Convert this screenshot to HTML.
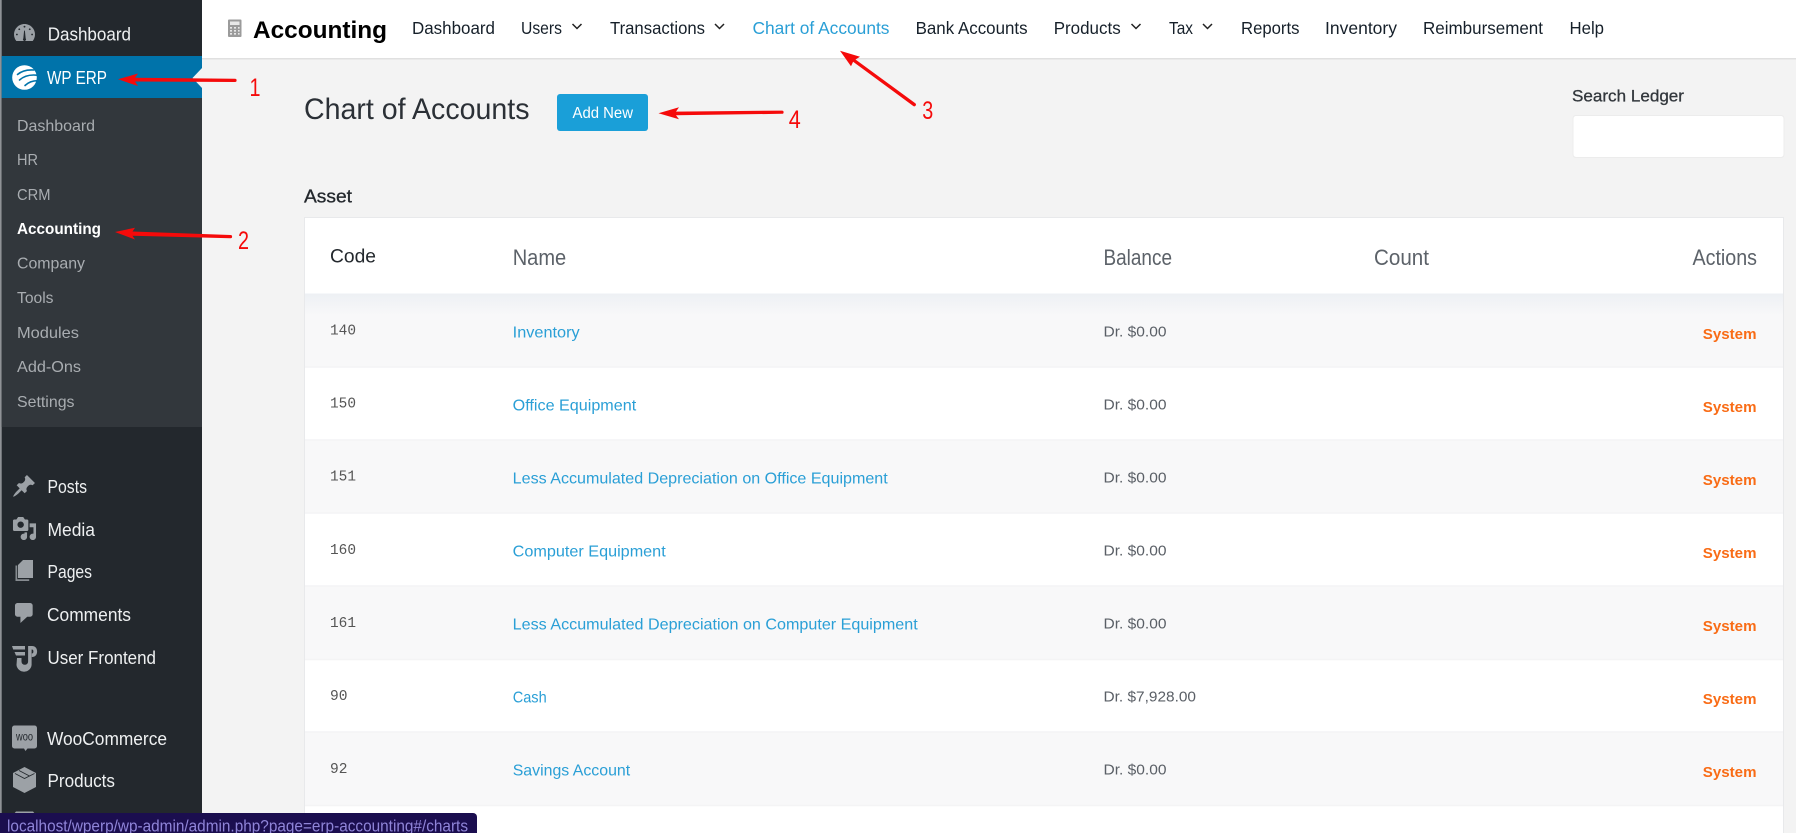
<!DOCTYPE html>
<html lang="en"><head><meta charset="utf-8"><title>Chart of Accounts</title>
<style>
html,body{margin:0;padding:0;width:1796px;height:833px;overflow:hidden;background:#f3f3f3}
svg{display:block}
text{font-family:"Liberation Sans",sans-serif}
.side{font-size:18px;fill:#eef0f1}
.sub{font-size:16px;fill:#a9adb1}
.nav{font-size:17.5px;fill:#16202a}
.th{font-size:22px;fill:#5c6269}
.mono{font-family:"Liberation Mono",monospace;font-size:14.5px;fill:#555}
.link{font-size:16px;fill:#2a9fd6}
.bal{font-size:15px;fill:#5a5f66}
.sys{font-size:15px;font-weight:bold;fill:#f96c16}
.num{font-size:25px;fill:#f50a0a}
.ic{fill:#9ca1a6}
</style></head><body>
<svg width="1796" height="833" viewBox="0 0 1796 833" xmlns="http://www.w3.org/2000/svg">
<defs><linearGradient id="g" x1="0" y1="0" x2="0" y2="1"><stop offset="0" stop-color="#edf0f4"/><stop offset="1" stop-color="#f8f8f9"/></linearGradient></defs>
<rect width="1796" height="833" fill="#f3f3f3"/>

<!-- top header -->
<rect x="202" width="1594" height="58" fill="#fff"/>
<rect x="202" y="58" width="1594" height="1.5" fill="#e0e0e0"/>
<rect x="228" y="19.5" width="13.5" height="17.5" rx="1" fill="#9b9b9b"/>
<rect x="230" y="21.5" width="9.5" height="3.5" fill="#e8e8e8"/>
<path d="M230 27h2v1.600h-2zM234 27h2v1.600h-2zM238 27h1.600v1.600H238zM230 30h2v1.600h-2zM234 30h2v1.600h-2zM238 30h1.600v1.600H238zM230 33h2v1.600h-2zM234 33h2v1.600h-2zM238 33h1.600v1.600H238z" fill="#e8e8e8"/>
<text x="253" y="38" font-size="24.500" font-weight="bold" fill="#000" textLength="134" lengthAdjust="spacingAndGlyphs">Accounting</text>
<text class="nav" x="412" y="34" textLength="83" lengthAdjust="spacingAndGlyphs">Dashboard</text>
<text class="nav" x="521" y="34" textLength="41" lengthAdjust="spacingAndGlyphs">Users</text>
<path d="M572.500 24l4.500 4.500 4.500-4.500" fill="none" stroke="#222" stroke-width="1.500"/>
<text class="nav" x="610" y="34" textLength="95" lengthAdjust="spacingAndGlyphs">Transactions</text>
<path d="M715 24l4.500 4.500 4.500-4.500" fill="none" stroke="#222" stroke-width="1.500"/>
<text class="nav" x="752.500" y="34" style="fill:#2a9fd6" textLength="137" lengthAdjust="spacingAndGlyphs">Chart of Accounts</text>
<text class="nav" x="915.600" y="34" textLength="112" lengthAdjust="spacingAndGlyphs">Bank Accounts</text>
<text class="nav" x="1053.700" y="34" textLength="67" lengthAdjust="spacingAndGlyphs">Products</text>
<path d="M1131.500 24l4.500 4.500 4.500-4.500" fill="none" stroke="#222" stroke-width="1.500"/>
<text class="nav" x="1169" y="34" textLength="24" lengthAdjust="spacingAndGlyphs">Tax</text>
<path d="M1203 24l4.500 4.500 4.500-4.500" fill="none" stroke="#222" stroke-width="1.500"/>
<text class="nav" x="1241" y="34" textLength="58.500" lengthAdjust="spacingAndGlyphs">Reports</text>
<text class="nav" x="1325" y="34" textLength="72" lengthAdjust="spacingAndGlyphs">Inventory</text>
<text class="nav" x="1423" y="34" textLength="120" lengthAdjust="spacingAndGlyphs">Reimbursement</text>
<text class="nav" x="1569.500" y="34" textLength="34.500" lengthAdjust="spacingAndGlyphs">Help</text>

<!-- title row -->
<text x="304" y="119" font-size="29.500" fill="#2b3036" textLength="225.500" lengthAdjust="spacingAndGlyphs">Chart of Accounts</text>
<rect x="557" y="94" width="91" height="37" rx="3" fill="#1a9fd8"/>
<text x="572.500" y="118" font-size="15.500" fill="#fff" textLength="60.500" lengthAdjust="spacingAndGlyphs">Add New</text>
<text x="1572" y="101.500" font-size="17" fill="#32373c" stroke="#32373c" stroke-width=".3" textLength="112" lengthAdjust="spacingAndGlyphs">Search Ledger</text>
<rect x="1573" y="115.500" width="211" height="42" rx="3" fill="#fff" stroke="#ececec"/>
<text x="304" y="202.500" font-size="18.500" fill="#23282d" stroke="#23282d" stroke-width=".3" textLength="48" lengthAdjust="spacingAndGlyphs">Asset</text>

<!-- card -->
<rect x="304.500" y="217.500" width="1479" height="640" fill="#fff" stroke="#e8e9eb"/>
<rect x="305" y="293.500" width="1478" height="73.500" fill="#f8f8f9"/>
<rect x="305" y="293.500" width="1478" height="22" fill="url(#g)"/>
<rect x="305" y="440" width="1478" height="73" fill="#f8f8f9"/>
<rect x="305" y="586" width="1478" height="73" fill="#f8f8f9"/>
<rect x="305" y="732" width="1478" height="73.500" fill="#f8f8f9"/>
<path d="M305 367h1478M305 440h1478M305 513h1478M305 586h1478M305 659.500h1478M305 732h1478M305 805.500h1478" stroke="#f4f4f5" stroke-width="1.500"/>

<text x="330" y="262.500" font-size="19" fill="#23282d" textLength="46" lengthAdjust="spacingAndGlyphs">Code</text>
<text class="th" x="512.700" y="264.800" textLength="53.500" lengthAdjust="spacingAndGlyphs">Name</text>
<text class="th" x="1103.500" y="264.800" textLength="68.500" lengthAdjust="spacingAndGlyphs">Balance</text>
<text class="th" x="1374" y="264.800" textLength="55" lengthAdjust="spacingAndGlyphs">Count</text>
<text class="th" x="1692.500" y="264.800" textLength="64.500" lengthAdjust="spacingAndGlyphs">Actions</text>

<text class="mono" x="330" y="334.500" textLength="26" lengthAdjust="spacingAndGlyphs">140</text>
<text class="link" x="512.700" y="337.500" textLength="67" lengthAdjust="spacingAndGlyphs">Inventory</text>
<text class="bal" x="1103.500" y="336.500" textLength="63" lengthAdjust="spacingAndGlyphs">Dr. $0.00</text>
<text class="sys" x="1702.800" y="339" textLength="53.700" lengthAdjust="spacingAndGlyphs">System</text>

<text class="mono" x="330" y="407.500" textLength="26" lengthAdjust="spacingAndGlyphs">150</text>
<text class="link" x="512.700" y="410.500" textLength="123.500" lengthAdjust="spacingAndGlyphs">Office Equipment</text>
<text class="bal" x="1103.500" y="409.500" textLength="63" lengthAdjust="spacingAndGlyphs">Dr. $0.00</text>
<text class="sys" x="1702.800" y="412" textLength="53.700" lengthAdjust="spacingAndGlyphs">System</text>

<text class="mono" x="330" y="480.500" textLength="26" lengthAdjust="spacingAndGlyphs">151</text>
<text class="link" x="512.700" y="483.500" textLength="375" lengthAdjust="spacingAndGlyphs">Less Accumulated Depreciation on Office Equipment</text>
<text class="bal" x="1103.500" y="482.500" textLength="63" lengthAdjust="spacingAndGlyphs">Dr. $0.00</text>
<text class="sys" x="1702.800" y="485" textLength="53.700" lengthAdjust="spacingAndGlyphs">System</text>

<text class="mono" x="330" y="554" textLength="26" lengthAdjust="spacingAndGlyphs">160</text>
<text class="link" x="512.700" y="556.500" textLength="153" lengthAdjust="spacingAndGlyphs">Computer Equipment</text>
<text class="bal" x="1103.500" y="555.500" textLength="63" lengthAdjust="spacingAndGlyphs">Dr. $0.00</text>
<text class="sys" x="1702.800" y="558" textLength="53.700" lengthAdjust="spacingAndGlyphs">System</text>

<text class="mono" x="330" y="627" textLength="26" lengthAdjust="spacingAndGlyphs">161</text>
<text class="link" x="512.700" y="629.500" textLength="405" lengthAdjust="spacingAndGlyphs">Less Accumulated Depreciation on Computer Equipment</text>
<text class="bal" x="1103.500" y="628.500" textLength="63" lengthAdjust="spacingAndGlyphs">Dr. $0.00</text>
<text class="sys" x="1702.800" y="631" textLength="53.700" lengthAdjust="spacingAndGlyphs">System</text>

<text class="mono" x="330" y="700" textLength="17.500" lengthAdjust="spacingAndGlyphs">90</text>
<text class="link" x="512.700" y="702.500" textLength="34" lengthAdjust="spacingAndGlyphs">Cash</text>
<text class="bal" x="1103.500" y="701.500" textLength="92.500" lengthAdjust="spacingAndGlyphs">Dr. $7,928.00</text>
<text class="sys" x="1702.800" y="704" textLength="53.700" lengthAdjust="spacingAndGlyphs">System</text>

<text class="mono" x="330" y="773" textLength="17.500" lengthAdjust="spacingAndGlyphs">92</text>
<text class="link" x="512.700" y="775.500" textLength="117.500" lengthAdjust="spacingAndGlyphs">Savings Account</text>
<text class="bal" x="1103.500" y="774.500" textLength="63" lengthAdjust="spacingAndGlyphs">Dr. $0.00</text>
<text class="sys" x="1702.800" y="777" textLength="53.700" lengthAdjust="spacingAndGlyphs">System</text>

<!-- sidebar -->
<rect width="202" height="833" fill="#23282d"/>
<rect width="1.700" height="833" fill="#8f9296"/>
<rect x="1.700" y="56" width="200.300" height="42" fill="#0073aa"/>
<rect x="1.700" y="98" width="200.300" height="329" fill="#32373c"/>
<path d="M202 68l-9.500 10 9.500 10z" fill="#f3f3f3"/>

<!-- gauge -->
<g transform="translate(11.400 20.100) scale(1.310)">
<path d="M3.760 16h12.480c1.100-1.370 1.760-3.110 1.760-5 0-4.420-3.580-8-8-8s-8 3.580-8 8c0 1.890.66 3.630 1.760 5z" class="ic"/>
<g fill="#23282d"><circle cx="10" cy="5" r=".7"/><circle cx="6" cy="7" r=".7"/><circle cx="14" cy="7" r=".7"/><circle cx="4.200" cy="11" r=".7"/><circle cx="15.800" cy="11" r=".7"/><path d="M9.100 14l.6-6h.6l.6 6a1.150 1.150 0 1 1-1.800 0z"/></g>
</g>
<text class="side" x="47.700" y="40.500" textLength="83.300" lengthAdjust="spacingAndGlyphs">Dashboard</text>

<!-- WP ERP logo -->
<circle cx="24.500" cy="77.500" r="12.300" fill="#fff"/>
<path d="M17.500 74.500c4-3.500 10-5 16.500-4.500M19.500 80c4.500-4 11-5.500 17.500-4.800M25 85.500c3.500-3.300 8-4.800 12.500-4.800" fill="none" stroke="#0073aa" stroke-width="1.600" stroke-linecap="round"/>
<text x="47" y="84" font-size="18.500" fill="#fff" textLength="60" lengthAdjust="spacingAndGlyphs">WP ERP</text>

<text class="sub" x="17" y="131" textLength="78" lengthAdjust="spacingAndGlyphs">Dashboard</text>
<text class="sub" x="17" y="165" textLength="21" lengthAdjust="spacingAndGlyphs">HR</text>
<text class="sub" x="17" y="200" textLength="33.500" lengthAdjust="spacingAndGlyphs">CRM</text>
<text class="sub" x="17" y="234" style="fill:#fff;font-weight:bold" textLength="84" lengthAdjust="spacingAndGlyphs">Accounting</text>
<text class="sub" x="17" y="268.500" textLength="68" lengthAdjust="spacingAndGlyphs">Company</text>
<text class="sub" x="17" y="303" textLength="36.500" lengthAdjust="spacingAndGlyphs">Tools</text>
<text class="sub" x="17" y="338" textLength="62" lengthAdjust="spacingAndGlyphs">Modules</text>
<text class="sub" x="17" y="372" textLength="64" lengthAdjust="spacingAndGlyphs">Add-Ons</text>
<text class="sub" x="17" y="407" textLength="57.500" lengthAdjust="spacingAndGlyphs">Settings</text>

<!-- pin -->
<path transform="translate(11.500 473.500) scale(1.260)" d="M10.440 3.020l1.820-1.820 6.360 6.350-1.830 1.820c-1.050-.68-2.480-.57-3.410.36l-.75.75c-.92.93-1.040 2.350-.35 3.410l-1.830 1.820-2.410-2.410-2.800 2.790c-.42.42-3.380 2.710-3.800 2.290s1.860-3.390 2.280-3.810l2.790-2.790L4.100 9.360l1.830-1.820c1.050.69 2.480.57 3.400-.36l.75-.75c.93-.92 1.050-2.350.36-3.410z" class="ic"/>
<text class="side" x="47.500" y="493" textLength="39.500" lengthAdjust="spacingAndGlyphs">Posts</text>
<!-- media -->
<path transform="translate(11.700 515.700) scale(1.280)" fill-rule="evenodd" d="M13 11V4c0-.55-.45-1-1-1h-1.670L9 1H5L3.670 3H2c-.55 0-1 .45-1 1v7c0 .55.45 1 1 1h10c.55 0 1-.45 1-1zM7 4.500c1.380 0 2.500 1.120 2.500 2.500S8.380 9.500 7 9.500 4.500 8.380 4.500 7 5.620 4.500 7 4.500zM14 6h5v10.500c0 1.380-1.120 2.500-2.500 2.500S14 17.880 14 16.500s1.120-2.500 2.500-2.500c.17 0 .34.02.5.05V9h-3V6zm-4 8.050V13h2v3.500c0 1.380-1.120 2.500-2.500 2.500S7 17.880 7 16.500 8.120 14 9.500 14c.17 0 .34.02.5.05z" class="ic"/>
<text class="side" x="47.500" y="536" textLength="47.500" lengthAdjust="spacingAndGlyphs">Media</text>
<!-- pages -->
<path d="M23 560h10v18H18v-13z" class="ic"/>
<path d="M15.500 565.500h1.700v13.800h12v1.700H15.500z" fill="#868b90"/>
<text class="side" x="47.500" y="578" textLength="44.500" lengthAdjust="spacingAndGlyphs">Pages</text>
<!-- comments -->
<path transform="translate(10.900 600.500) scale(1.360 1.250)" d="M5 2h9c1.100 0 2 .9 2 2v7c0 1.100-.9 2-2 2h-2l-5 5v-5H5c-1.100 0-2-.9-2-2V4c0-1.100.9-2 2-2z" class="ic"/>
<text class="side" x="47" y="621" textLength="84" lengthAdjust="spacingAndGlyphs">Comments</text>
<!-- user frontend -->
<path d="M12 646h13v3.500H13.200zM14.500 652h10.500v3.500H16zM17 658h4.500v3.500a3.300 3.300 0 0 0 6.600 0V646h4c3 0 5 2.200 5 5.500s-2 5.500-5 5.500h-.3v-3.500c1.100 0 1.600-.8 1.600-2s-.5-2-1.600-2h-.2v15.500a7.600 7.600 0 0 1-15.100 0z" class="ic"/>
<text class="side" x="47.500" y="664" textLength="108.500" lengthAdjust="spacingAndGlyphs">User Frontend</text>
<!-- woo -->
<path d="M14.500 725.500h20a2.500 2.500 0 0 1 2.500 2.500v18a2.500 2.500 0 0 1-2.500 2.500h-7l-2 2.500-1.500-2.500h-9.500a2.500 2.500 0 0 1-2.500-2.500v-18a2.500 2.500 0 0 1 2.500-2.500z" class="ic"/>
<text x="16" y="740.500" font-size="11.500" fill="#23282d" textLength="17" lengthAdjust="spacingAndGlyphs">woo</text>
<text class="side" x="47" y="745" textLength="120" lengthAdjust="spacingAndGlyphs">WooCommerce</text>
<!-- products -->
<path d="M24.500 767l11.500 6v14l-11.500 6-11.500-6v-14z" class="ic"/>
<path d="M15 773.500l9.500 5 10-5M19 770.500l10.500 5.500" fill="none" stroke="#23282d" stroke-width=".8"/>
<text class="side" x="47.500" y="787" textLength="67.500" lengthAdjust="spacingAndGlyphs">Products</text>
<path d="M13 815l3-3.500h17l3 3.500z" class="ic"/>

<!-- status bar -->
<path d="M0 813h473a4 4 0 0 1 4 4v16H0z" fill="#1b0e4f"/>
<text x="7" y="831.500" font-size="16.500" fill="#8f84d8" textLength="461" lengthAdjust="spacingAndGlyphs">localhost/wperp/wp-admin/admin.php?page=erp-accounting#/charts</text>

<!-- annotations -->
<g fill="#f50a0a" stroke="none">
<path d="M118 79.300L138 73.500l-3 4.200 100 1.100a1.600 1.600 0 0 1 0 3.200l-100-.5 3 4.500z"/>
<path d="M115 232l20-4.300-2.500 3.800 98 3.500a1.600 1.600 0 0 1 0 3.200l-98-2.500 2.500 3.800z"/>
<path d="M840 50.700l20 6-4.500 2.800 59.800 43.800a1.700 1.700 0 0 1-2.200 2.600l-60-44.200-2.100 4.500z"/>
<path d="M658.500 113.300l20.500-6-3 4.300 106-1a1.600 1.600 0 0 1 0 3.200l-106 1.400 3 4.100z"/>
</g>
<text class="num" x="249.500" y="96" textLength="11" lengthAdjust="spacingAndGlyphs">1</text>
<text class="num" x="238" y="249" textLength="11" lengthAdjust="spacingAndGlyphs">2</text>
<text class="num" x="922.300" y="119" textLength="11" lengthAdjust="spacingAndGlyphs">3</text>
<text class="num" x="788.800" y="128" textLength="12" lengthAdjust="spacingAndGlyphs">4</text>
</svg>
</body></html>
